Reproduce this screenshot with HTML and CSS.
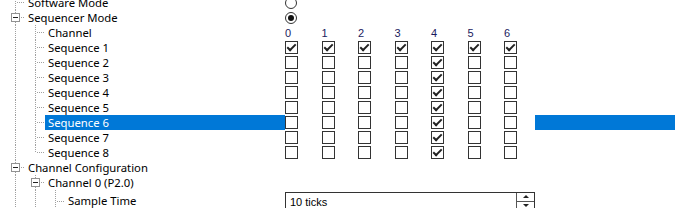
FILE: index.html
```html
<!DOCTYPE html>
<html>
<head>
<meta charset="utf-8">
<link rel="stylesheet" href="styles.css">
</head>
<body>
<div class="tree">
  <div class="row">
    <div class="name"><span class="g tee"></span><span class="label">Software Mode</span></div>
    <div class="value"><span class="radio"></span></div>
    <div class="extra"></div>
  </div>
  <div class="row">
    <div class="name"><span class="g tee exp"><span class="box"></span></span><span class="label">Sequencer Mode</span></div>
    <div class="value"><span class="radio on"></span></div>
    <div class="extra"></div>
  </div>
  <div class="row">
    <div class="name"><span class="g pipe"></span><span class="g tee"></span><span class="label">Channel</span></div>
    <div class="value cols"><span class="num">0</span><span class="num">1</span><span class="num">2</span><span class="num">3</span><span class="num">4</span><span class="num">5</span><span class="num">6</span></div>
    <div class="extra"></div>
  </div>
  <div class="row">
    <div class="name"><span class="g pipe"></span><span class="g tee"></span><span class="label">Sequence 1</span></div>
    <div class="value cols"><span class="cb on"></span><span class="cb on"></span><span class="cb on"></span><span class="cb on"></span><span class="cb on"></span><span class="cb on"></span><span class="cb on"></span></div>
    <div class="extra"></div>
  </div>
  <div class="row">
    <div class="name"><span class="g pipe"></span><span class="g tee"></span><span class="label">Sequence 2</span></div>
    <div class="value cols"><span class="cb"></span><span class="cb"></span><span class="cb"></span><span class="cb"></span><span class="cb on"></span><span class="cb"></span><span class="cb"></span></div>
    <div class="extra"></div>
  </div>
  <div class="row">
    <div class="name"><span class="g pipe"></span><span class="g tee"></span><span class="label">Sequence 3</span></div>
    <div class="value cols"><span class="cb"></span><span class="cb"></span><span class="cb"></span><span class="cb"></span><span class="cb on"></span><span class="cb"></span><span class="cb"></span></div>
    <div class="extra"></div>
  </div>
  <div class="row">
    <div class="name"><span class="g pipe"></span><span class="g tee"></span><span class="label">Sequence 4</span></div>
    <div class="value cols"><span class="cb"></span><span class="cb"></span><span class="cb"></span><span class="cb"></span><span class="cb on"></span><span class="cb"></span><span class="cb"></span></div>
    <div class="extra"></div>
  </div>
  <div class="row">
    <div class="name"><span class="g pipe"></span><span class="g tee"></span><span class="label">Sequence 5</span></div>
    <div class="value cols"><span class="cb"></span><span class="cb"></span><span class="cb"></span><span class="cb"></span><span class="cb on"></span><span class="cb"></span><span class="cb"></span></div>
    <div class="extra"></div>
  </div>
  <div class="row sel">
    <div class="name"><span class="g pipe"></span><span class="g tee"></span><span class="label">Sequence 6</span></div>
    <div class="value cols"><span class="cb"></span><span class="cb"></span><span class="cb"></span><span class="cb"></span><span class="cb on"></span><span class="cb"></span><span class="cb"></span></div>
    <div class="extra"></div>
  </div>
  <div class="row">
    <div class="name"><span class="g pipe"></span><span class="g tee"></span><span class="label">Sequence 7</span></div>
    <div class="value cols"><span class="cb"></span><span class="cb"></span><span class="cb"></span><span class="cb"></span><span class="cb on"></span><span class="cb"></span><span class="cb"></span></div>
    <div class="extra"></div>
  </div>
  <div class="row">
    <div class="name"><span class="g pipe"></span><span class="g elbow"></span><span class="label">Sequence 8</span></div>
    <div class="value cols"><span class="cb"></span><span class="cb"></span><span class="cb"></span><span class="cb"></span><span class="cb on"></span><span class="cb"></span><span class="cb"></span></div>
    <div class="extra"></div>
  </div>
  <div class="row">
    <div class="name"><span class="g tee exp"><span class="box"></span></span><span class="label">Channel Configuration</span></div>
    <div class="value"></div>
    <div class="extra"></div>
  </div>
  <div class="row">
    <div class="name"><span class="g pipe"></span><span class="g tee exp"><span class="box"></span></span><span class="label">Channel 0 (P2.0)</span></div>
    <div class="value"></div>
    <div class="extra"></div>
  </div>
  <div class="row tall">
    <div class="name"><span class="g pipe"></span><span class="g pipe"></span><span class="g tee"></span><span class="label">Sample Time</span></div>
    <div class="value">
      <div class="field">
        <span class="txt">10 ticks</span>
        <span class="spin"><span class="btn up"></span><span class="btn down"></span></span>
      </div>
    </div>
    <div class="extra"></div>
  </div>
</div>
</body>
</html>
```

FILE: styles.css
```css
* { box-sizing: border-box; }
html, body { margin: 0; padding: 0; background: #fff; }
body {
  width: 675px;
  height: 208px;
  overflow: hidden;
  font-family: "Noto Sans", "Open Sans", sans-serif;
  font-size: 11.3px;
  color: #000;
}
.tree { margin-top: -5px; }
.row { display: flex; height: 15px; --mid: 7px; }
.row.tall { height: 21px; --mid: 11px; }
.name { width: 285px; flex: none; display: flex; padding-left: 5px; }
.g { width: 20px; flex: none; height: 100%; display: block; }
.pipe {
  background: repeating-linear-gradient(to bottom, #a0a0a0 0 1px, transparent 1px 2px) 10px 0 / 1px 100% no-repeat;
}
.tee {
  background:
    repeating-linear-gradient(to right, #a0a0a0 0 1px, transparent 1px 2px) 12px var(--mid) / 10px 1px no-repeat,
    repeating-linear-gradient(to bottom, #a0a0a0 0 1px, transparent 1px 2px) 10px 0 / 1px 100% no-repeat;
}
.elbow {
  background:
    repeating-linear-gradient(to right, #a0a0a0 0 1px, transparent 1px 2px) 12px var(--mid) / 10px 1px no-repeat,
    repeating-linear-gradient(to bottom, #a0a0a0 0 1px, transparent 1px 2px) 10px 0 / 1px 8px no-repeat;
}
.exp { display: flex; padding: 3px 0 0 6px; }
.box {
  width: 9px;
  height: 9px;
  border: 1px solid #919191;
  background: linear-gradient(#222, #222) center / 5px 1px no-repeat, #fff;
}
.label {
  flex: 1;
  padding-left: 3px;
  line-height: 15px;
  white-space: nowrap;
}
.tall .label { line-height: 21px; }
.sel .label, .sel .extra { background: #0078d7; color: #fff; }
.value { width: 250px; flex: none; display: flex; }
.cols { display: grid; grid-template-columns: repeat(7, 36.5px); align-items: start; }
.extra { flex: 1; }
.num {
  font-family: "Liberation Sans", Arial, sans-serif;
  font-size: 11px;
  line-height: 16px;
  color: #1a1a5e;
}
.cb {
  width: 13px;
  height: 13px;
  margin-top: 1px;
  border: 1px solid #333;
  background: #fff;
  display: flex;
  align-items: center;
  justify-content: center;
}
.cb.on::after {
  content: "";
  width: 7px;
  height: 3px;
  border-left: 2px solid #222;
  border-bottom: 2px solid #222;
  transform: translate(0, -1px) rotate(-45deg);
}
.radio {
  width: 12px;
  height: 12px;
  margin-top: 2px;
  border: 1px solid #333;
  border-radius: 50%;
  display: flex;
  align-items: center;
  justify-content: center;
}
.radio.on::after {
  content: "";
  width: 6px;
  height: 6px;
  border-radius: 50%;
  background: #111;
}
.field {
  display: flex;
  width: 250px;
  height: 19px;
  margin-top: 2px;
  border: 1px solid #333;
  background: #fff;
}
.txt {
  flex: 1;
  padding-left: 4px;
  font-family: "Liberation Sans", Arial, sans-serif;
  font-size: 11px;
  line-height: 18px;
}
.spin {
  width: 18px;
  flex: none;
  border-left: 1px solid #555;
  display: flex;
  flex-direction: column;
}
.btn {
  height: 9px;
  display: flex;
  align-items: center;
  justify-content: center;
}
.btn.up { border-bottom: 1px solid #555; }
.btn.up::after {
  content: "";
  border-left: 3px solid transparent;
  border-right: 3px solid transparent;
  border-bottom: 3px solid #222;
}
.btn.down::after {
  content: "";
  border-left: 3px solid transparent;
  border-right: 3px solid transparent;
  border-top: 3px solid #222;
}
```
